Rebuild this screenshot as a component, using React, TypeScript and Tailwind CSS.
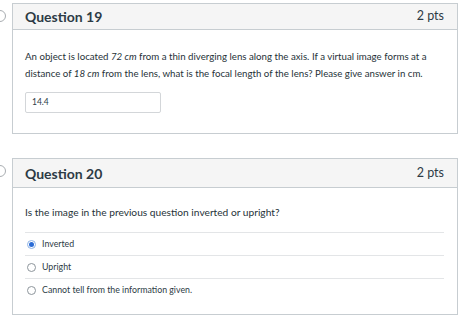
const font = { fontFamily: "Lato, 'Liberation Sans', sans-serif" };

const Marker = () => (
    <div className="w-[12px] h-[12px] shrink-0 rounded-full border border-[#a9adb1] bg-white -ml-[6px] mt-[7px]"></div>
);

const Header = ({ title }: { title: string }) => (
    <div className="h-full flex items-center justify-between bg-[#f5f5f5] border-b border-[#c7cdd1] pl-[12px] pr-[13px]">
        <span className="text-[14px] font-bold text-[#2d3b45]">{title}</span>
        <span className="text-[12.5px] text-[#2d3b45]">2 pts</span>
    </div>
);

const Radio = ({ checked }: { checked?: boolean }) =>
    checked ? (
        <span className="w-[9px] h-[9px] rounded-full border border-[#8fb4e6] bg-white flex items-center justify-center">
            <span className="w-[5px] h-[5px] rounded-full bg-[#2b6cd6]"></span>
        </span>
    ) : (
        <span className="w-[9px] h-[9px] rounded-full border border-[#8d959b] bg-white"></span>
    );

const App = () => {
    const options = [
        { label: "Inverted", checked: true },
        { label: "Upright" },
        { label: "Cannot tell from the information given." },
    ];

    return (
        <div className="bg-white w-[474px] h-[323px] overflow-hidden pt-[3px]" style={font}>
            <div className="flex">
                <Marker />
                <div className="ml-[6px] w-[446px] border border-[#c7cdd1] h-[131px]">
                    <div className="h-[26px]">
                        <Header title="Question 19" />
                    </div>
                    <div className="px-[12px] pt-[18px]">
                        <p className="text-[9.7px] leading-[17px] text-[#263238]">
                            An object is located <i>72 cm</i> from a thin diverging lens along the axis. If a virtual image forms at a distance of <i>18 cm</i> from the lens, what is the focal length of the lens? Please give answer in cm.
                        </p>
                        <div className="mt-[10px] w-[136px] h-[21px] border border-[#d3d6d9] rounded-[2px] flex items-center pl-[6px] text-[8.5px] text-[#2d3b45]">
                            14.4
                        </div>
                    </div>
                </div>
            </div>

            <div className="flex mt-[24px]">
                <Marker />
                <div className="ml-[6px] w-[446px] border border-[#c7cdd1] h-[157px]">
                    <div className="h-[29px]">
                        <Header title="Question 20" />
                    </div>
                    <div className="px-[12px] pt-[16px]">
                        <p className="text-[10.2px] leading-[17px] text-[#263238]">
                            Is the image in the previous question inverted or upright?
                        </p>
                        <div className="mt-[11px] mr-[1px]">
                            {options.map((o) => (
                                <div key={o.label} className="h-[23px] border-t border-[#e3e5e7] flex items-center gap-[6px] pl-[2px]">
                                    <Radio checked={o.checked} />
                                    <span className="text-[8.8px] text-[#2d3b45]">{o.label}</span>
                                </div>
                            ))}
                        </div>
                    </div>
                </div>
            </div>
        </div>
    );
};

export default App;
